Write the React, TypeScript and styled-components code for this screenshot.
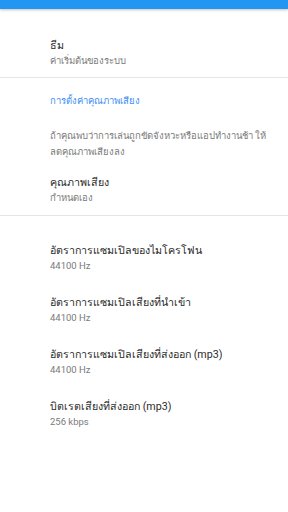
import { createGlobalStyle } from "styled-components";
import styled from "styled-components";

const GlobalStyle = createGlobalStyle`
  html, body {
    margin: 0;
    padding: 0;
    background: #fff;
  }
  body {
    font-family: Roboto, "Noto Sans", "DejaVu Sans", sans-serif;
    -webkit-font-smoothing: antialiased;
  }
`;

const Screen = styled.div`
  width: 288px;
  min-height: 512px;
  background: #fff;
  display: flex;
  flex-direction: column;
`;

const StatusBar = styled.div`
  height: 9px;
  background: #2196f3;
  box-shadow: 0 1px 3px rgba(0, 0, 0, 0.25);
`;

const Pref = styled.div<{ $top?: number; $bottom?: number }>`
  padding: ${(p) => p.$top ?? 10}px 16px ${(p) => p.$bottom ?? 10}px 50px;
  display: flex;
  flex-direction: column;
`;

const Title = styled.div`
  font-size: 10.7px;
  line-height: 16px;
  color: #2b2b2b;
`;

const Summary = styled.div`
  font-size: 9.5px;
  line-height: 14px;
  color: #7a7a7a;
`;

const Divider = styled.div`
  height: 1px;
  background: #e4e4e4;
`;

const Category = styled.div`
  padding: 16px 16px 0 50px;
  font-size: 9.5px;
  line-height: 14px;
  color: #3d8ef5;
`;

const Note = styled.div`
  padding: 20px 16px 0 50px;
  font-size: 9.5px;
  line-height: 16px;
  color: #7a7a7a;
`;

const Spacer = styled.div`
  height: 16px;
`;

const rates = [
  { title: "อัตราการแซมเปิลของไมโครโฟน", value: "44100 Hz" },
  { title: "อัตราการแซมเปิลเสียงที่นำเข้า", value: "44100 Hz" },
  { title: "อัตราการแซมเปิลเสียงที่ส่งออก (mp3)", value: "44100 Hz" },
  { title: "บิตเรตเสียงที่ส่งออก (mp3)", value: "256 kbps" },
];

export default function App() {
  return (
    <Screen>
      <GlobalStyle />
      <StatusBar />
      <Pref $top={29} $bottom={9}>
        <Title>ธีม</Title>
        <Summary>ค่าเริ่มต้นของระบบ</Summary>
      </Pref>
      <Divider />
      <Category>การตั้งค่าคุณภาพเสียง</Category>
      <Note>
        ถ้าคุณพบว่าการเล่นถูกขัดจังหวะหรือแอปทำงานช้า ให้ลดคุณภาพเสียงลง
      </Note>
      <Pref $top={15} $bottom={10}>
        <Title>คุณภาพเสียง</Title>
        <Summary>กำหนดเอง</Summary>
      </Pref>
      <Divider />
      <Spacer />
      {rates.map((r) => (
        <Pref key={r.title} $top={11} $bottom={11}>
          <Title>{r.title}</Title>
          <Summary>{r.value}</Summary>
        </Pref>
      ))}
    </Screen>
  );
}
